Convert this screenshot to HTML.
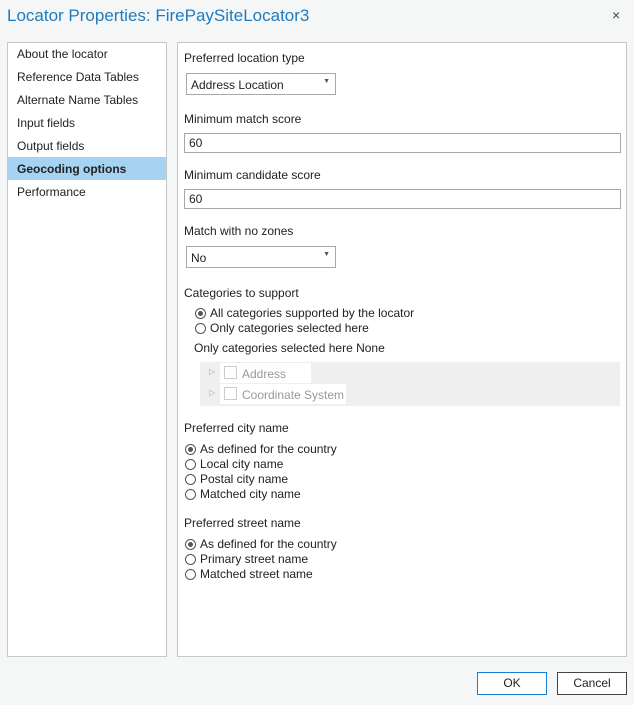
<!DOCTYPE html>
<html><head><style>
body{margin:0;width:634px;height:705px;background:#f5f6f6;font-family:"Liberation Sans",sans-serif;font-size:12px;color:#222;position:relative;overflow:hidden}
.a{position:absolute;white-space:nowrap}
.panel{position:absolute;background:#fff;border:1px solid #c8c8c8}
.inp{position:absolute;background:#fff;border:1px solid #a8a8a8;height:19px;box-sizing:border-box;padding:2px 4px;font-size:12px}
.radio{position:absolute;width:11px;height:11px;border:1px solid #555;border-radius:50%;box-sizing:border-box;background:#fff}
.radio.on::after{content:"";position:absolute;left:2px;top:2px;width:5px;height:5px;border-radius:50%;background:#555}
.cb{position:absolute;width:13px;height:13px;border:1px solid #ccc;box-sizing:border-box;background:#fff}
.btn{position:absolute;height:23px;box-sizing:border-box;text-align:center;line-height:21px;background:#fff;font-size:12px}
</style></head><body>
<div class="a" style="left:7px;top:6px;font-size:17px;color:#1e7cbe">Locator Properties: FirePaySiteLocator3</div>
<div class="a" style="left:612px;top:7px;font-size:14px;color:#444">×</div>
<div class="panel" style="left:7px;top:42px;width:158px;height:613px"></div>
<div class="a" style="left:17px;top:47px">About the locator</div>
<div class="a" style="left:17px;top:70px">Reference Data Tables</div>
<div class="a" style="left:17px;top:93px">Alternate Name Tables</div>
<div class="a" style="left:17px;top:116px">Input fields</div>
<div class="a" style="left:17px;top:139px">Output fields</div>
<div class="a" style="left:8px;top:157px;width:158px;height:23px;background:#a6d3f1"></div>
<div class="a" style="left:17px;top:162px;font-weight:bold">Geocoding options</div>
<div class="a" style="left:17px;top:185px">Performance</div>
<div class="panel" style="left:177px;top:42px;width:448px;height:613px"></div>
<div class="a" style="left:184px;top:51px">Preferred location type</div>
<div class="inp" style="left:186px;top:73px;width:150px;height:22px;padding-top:4px">Address Location<span style="position:absolute;right:5px;top:4px;font-size:7px;color:#555">▼</span></div>
<div class="a" style="left:184px;top:112px">Minimum match score</div>
<div class="inp" style="left:184px;top:133px;width:437px;height:20px">60</div>
<div class="a" style="left:184px;top:168px">Minimum candidate score</div>
<div class="inp" style="left:184px;top:189px;width:437px;height:20px">60</div>
<div class="a" style="left:184px;top:224px">Match with no zones</div>
<div class="inp" style="left:186px;top:246px;width:150px;height:22px;padding-top:4px">No<span style="position:absolute;right:5px;top:4px;font-size:7px;color:#555">▼</span></div>
<div class="a" style="left:184px;top:286px">Categories to support</div>
<div class="radio on" style="left:195px;top:308px"></div><div class="a" style="left:210px;top:306px">All categories supported by the locator</div>
<div class="radio" style="left:195px;top:323px"></div><div class="a" style="left:210px;top:321px">Only categories selected here</div>
<div class="a" style="left:194px;top:341px">Only categories selected here None</div>
<div class="a" style="left:200px;top:362px;width:420px;height:44px;background:#efefef"></div>
<div class="a" style="left:220px;top:363px;width:91px;height:20px;background:#fff"></div>
<div class="a" style="left:220px;top:384px;width:126px;height:20px;background:#fff"></div>
<div class="a" style="left:209px;top:367px;font-size:8px;color:#aaa">▷</div>
<div class="a" style="left:209px;top:388px;font-size:8px;color:#aaa">▷</div>
<div class="cb" style="left:224px;top:366px"></div><div class="a" style="left:242px;top:367px;color:#999">Address</div>
<div class="cb" style="left:224px;top:387px"></div><div class="a" style="left:242px;top:388px;color:#999">Coordinate System</div>
<div class="a" style="left:184px;top:421px">Preferred city name</div>
<div class="radio on" style="left:185px;top:444px"></div><div class="a" style="left:200px;top:442px">As defined for the country</div>
<div class="radio" style="left:185px;top:459px"></div><div class="a" style="left:200px;top:457px">Local city name</div>
<div class="radio" style="left:185px;top:474px"></div><div class="a" style="left:200px;top:472px">Postal city name</div>
<div class="radio" style="left:185px;top:489px"></div><div class="a" style="left:200px;top:487px">Matched city name</div>
<div class="a" style="left:184px;top:516px">Preferred street name</div>
<div class="radio on" style="left:185px;top:539px"></div><div class="a" style="left:200px;top:537px">As defined for the country</div>
<div class="radio" style="left:185px;top:554px"></div><div class="a" style="left:200px;top:552px">Primary street name</div>
<div class="radio" style="left:185px;top:569px"></div><div class="a" style="left:200px;top:567px">Matched street name</div>
<div class="btn" style="left:477px;top:672px;width:70px;border:1px solid #1a7fd4">OK</div>
<div class="btn" style="left:557px;top:672px;width:70px;border:1px solid #444">Cancel</div>
</body></html>
